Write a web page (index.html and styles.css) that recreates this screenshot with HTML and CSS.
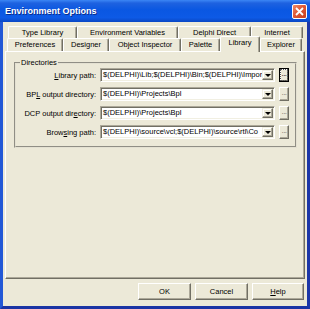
FILE: index.html
```html
<!DOCTYPE html>
<html lang="en">
<head>
  <meta charset="UTF-8" />
  <title>Environment Options</title>
  <link rel="stylesheet" href="styles.css">
</head>
<body>
  <div class="window">
    <div class="titlebar">
      <span class="title">Environment Options</span>
      <div class="close">
        <svg width="9" height="9" viewBox="0 0 9 9"><path d="M1 1 L8 8 M8 1 L1 8" stroke="#fff" stroke-width="1.8" /></svg>
      </div>
    </div>

    <div class="client">
      <div class="tab-row back">
        <div class="tab t-typelib">Type Library</div>
        <div class="tab t-envvars">Environment Variables</div>
        <div class="tab t-direct">Delphi Direct</div>
        <div class="tab t-internet">Internet</div>
      </div>
      <div class="tab-row front">
        <div class="tab t-prefs">Preferences</div>
        <div class="tab t-designer">Designer</div>
        <div class="tab t-inspector">Object Inspector</div>
        <div class="tab t-palette">Palette</div>
        <div class="tab t-library selected">Library</div>
        <div class="tab t-explorer">Explorer</div>
      </div>

      <div class="page">
        <fieldset class="group">
          <legend>Directories</legend>
          <div class="dir-grid">
            <label><u>L</u>ibrary path:</label>
            <div class="combo"><span class="combo-text">$(DELPHI)\Lib;$(DELPHI)\Bin;$(DELPHI)\Impor</span><span class="drop"><i></i></span></div>
            <div class="ellipsis focused"><span>...</span></div>

            <label>BP<u>L</u> output directory:</label>
            <div class="combo"><span class="combo-text">$(DELPHI)\Projects\Bpl</span><span class="drop"><i></i></span></div>
            <div class="ellipsis"><span>...</span></div>

            <label>DCP output dir<u>e</u>ctory:</label>
            <div class="combo"><span class="combo-text">$(DELPHI)\Projects\Bpl</span><span class="drop"><i></i></span></div>
            <div class="ellipsis"><span>...</span></div>

            <label>Brow<u>s</u>ing path:</label>
            <div class="combo"><span class="combo-text">$(DELPHI)\source\vcl;$(DELPHI)\source\rtl\Co</span><span class="drop"><i></i></span></div>
            <div class="ellipsis"><span>...</span></div>
          </div>
        </fieldset>
      </div>

      <div class="buttons">
        <div class="btn b-ok">OK</div>
        <div class="btn b-cancel">Cancel</div>
        <div class="btn b-help"><u>H</u>elp</div>
      </div>
    </div>
  </div>
</body>
</html>
```

FILE: styles.css
```css
* {
  margin: 0;
  padding: 0;
  box-sizing: border-box;
}
body {
  background: #ece9d8;
  font-family: 'Liberation Sans', Arial, sans-serif;
  font-size: 7.5px;
  color: #000;
}
.window {
  width: 310px;
  height: 309px;
  background: #ece9d8;
  overflow: hidden;
}

/* title bar */
.titlebar {
  height: 22px;
  display: flex;
  align-items: center;
  padding-left: 5px;
  background: linear-gradient(to bottom, #3b86f5 0%, #1e62e0 14%, #0a57e2 45%, #0d5ae6 80%, #0a47c4 100%);
}
.title {
  color: #fff;
  font-weight: bold;
  font-size: 9px;
  text-shadow: 1px 1px 0 #0b2d8a;
}
.close {
  margin-left: auto;
  margin-right: 3px;
  width: 15px;
  height: 15px;
  border: 1px solid #fff;
  border-radius: 2px;
  background: linear-gradient(135deg, #f08a68 0%, #e05a36 45%, #c8401e 100%);
  display: flex;
  align-items: center;
  justify-content: center;
}

/* client area with blue frame */
.client {
  height: 287px;
  border-left: 3px solid #2358d6;
  border-right: 3px solid #1c36a8;
  border-bottom: 3px solid #1a34a4;
  padding-top: 4px;
}

/* tabs */
.tab-row {
  display: flex;
}
.tab-row.back {
  height: 12px;
  padding-left: 5px;
}
.tab-row.front {
  height: 13px;
  padding-left: 4px;
}
.tab {
  height: 100%;
  text-align: center;
  white-space: nowrap;
  border-top: 1px solid #fff;
  border-left: 1px solid #fff;
  border-right: 1px solid #716f64;
  border-radius: 2px 2px 0 0;
  box-shadow: inset -1px 0 #aca899;
  line-height: 11px;
}
.t-typelib { width: 69px; }
.t-envvars { width: 101px; }
.t-direct { width: 73px; }
.t-internet { width: 52px; }
.t-prefs { width: 56px; }
.t-designer { width: 46px; }
.t-inspector { width: 72px; }
.t-palette { width: 39px; }
.t-library { width: 40px; }
.t-explorer { width: 42px; }
.tab.selected {
  position: relative;
  z-index: 2;
  height: 16px;
  margin-top: -2px;
  background: #ece9d8;
  line-height: 11px;
}

/* page */
.page {
  margin-left: 2px;
  width: 300px;
  height: 228px;
  border-top: 1px solid #fff;
  border-left: 1px solid #fff;
  border-right: 1px solid #716f64;
  border-bottom: 1px solid #716f64;
  box-shadow: inset -1px -1px #aca899;
  padding: 6px 0 0 8px;
}
.group {
  width: 283px;
  border: 2px groove #e4e1d2;
  padding: 0 6px 7px 0;
  min-width: 0;
}
.group legend {
  margin-left: 4px;
  padding: 0 1px;
  line-height: 9px;
}
.dir-grid {
  margin-top: 1px;
  display: grid;
  grid-template-columns: 80px 175px 10px;
  grid-auto-rows: 14px;
  column-gap: 4px;
  row-gap: 5px;
  align-items: center;
}
.dir-grid label {
  text-align: right;
  white-space: nowrap;
}

/* combobox */
.combo {
  height: 14px;
  display: flex;
  background: #fff;
  border: 1px solid;
  border-color: #aca899 #fff #fff #aca899;
  box-shadow: inset 1px 1px #716f64, inset -1px -1px #f1efe2;
  padding: 1px;
}
.combo-text {
  flex: 1;
  overflow: hidden;
  white-space: nowrap;
  padding-left: 1px;
  line-height: 10px;
}
.drop {
  width: 11px;
  height: 10px;
  background: #ece9d8;
  border: 1px solid;
  border-color: #f1efe2 #716f64 #716f64 #f1efe2;
  box-shadow: inset -1px -1px #aca899, inset 1px 1px #fff;
  display: flex;
  align-items: center;
  justify-content: center;
}
.drop i {
  border-left: 3px solid transparent;
  border-right: 3px solid transparent;
  border-top: 3px solid #000;
}

/* ellipsis buttons */
.ellipsis {
  height: 14px;
  background: #ece9d8;
  border: 1px solid;
  border-color: #fff #716f64 #716f64 #fff;
  box-shadow: inset -1px -1px #aca899;
  text-align: center;
  color: #77756a;
  font-size: 8px;
  line-height: 9px;
  overflow: hidden;
}
.ellipsis span {
  display: block;
  letter-spacing: -0.5px;
}
.ellipsis.focused {
  border-color: #000;
  box-shadow: inset 1px 1px #fff, inset -1px -1px #716f64;
  color: #000;
  padding: 1px;
}
.ellipsis.focused span {
  outline: 1px dotted #555;
  line-height: 8px;
  height: 10px;
}

/* dialog buttons */
.buttons {
  display: flex;
  justify-content: flex-end;
  gap: 4px;
  margin-top: 4px;
  margin-right: 3px;
}
.btn {
  height: 17px;
  border: 1px solid;
  border-color: #fff #716f64 #716f64 #fff;
  box-shadow: inset -1px -1px #aca899;
  text-align: center;
  line-height: 15px;
}
.b-ok { width: 53px; }
.b-cancel { width: 53px; }
.b-help { width: 52px; }
```
